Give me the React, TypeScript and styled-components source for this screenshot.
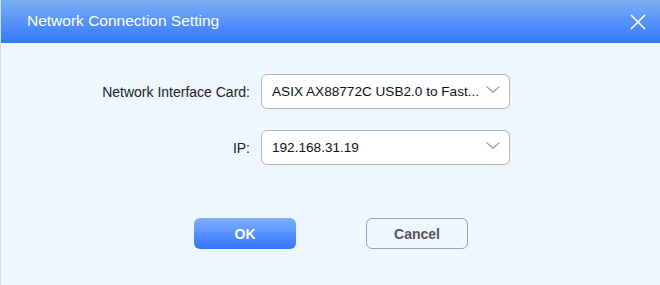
import React from "react";
import styled, { createGlobalStyle } from "styled-components";

const GlobalStyle = createGlobalStyle`
  html, body {
    margin: 0;
    padding: 0;
    background: #eef6ff;
    font-family: "Liberation Sans", Arial, sans-serif;
  }
`;

type FieldProps = {
  label: string;
  value: string;
};

const Field: React.FC<FieldProps> = ({ label, value }) => (
  <Row>
    <Label>{label}</Label>
    <Select>
      <SelectValue>{value}</SelectValue>
      <Chevron viewBox="0 0 14 7">
        <path d="M0.5 0.5 L7 6.2 L13.5 0.5" />
      </Chevron>
    </Select>
  </Row>
);

const App: React.FC = () => {
  return (
    <>
      <GlobalStyle />
      <Dialog>
        <Header>
          <Title>Network Connection Setting</Title>
          <CloseButton aria-label="close">
            <svg viewBox="0 0 16 16" width="16" height="16">
              <path d="M1 1 L15 15 M15 1 L1 15" />
            </svg>
          </CloseButton>
        </Header>
        <Body>
          <Fields>
            <Field
              label="Network Interface Card:"
              value="ASIX AX88772C USB2.0 to Fast..."
            />
            <Field label="IP:" value="192.168.31.19" />
          </Fields>
          <Actions>
            <PrimaryButton>OK</PrimaryButton>
            <SecondaryButton>Cancel</SecondaryButton>
          </Actions>
        </Body>
      </Dialog>
    </>
  );
};

export default App;

const Dialog = styled.div`
  width: 660px;
  height: 285px;
  display: flex;
  flex-direction: column;
  background: #eef6ff;
  border-left: 1px solid #d8dde4;
  box-sizing: border-box;
`;

const Header = styled.div`
  height: 43px;
  flex-shrink: 0;
  display: flex;
  align-items: center;
  justify-content: space-between;
  padding: 0 14px 0 26px;
  background: linear-gradient(to bottom, #7aaff1, #3377ff);
`;

const Title = styled.div`
  color: #ffffff;
  font-size: 15.5px;
  margin-top: -2px;
`;

const CloseButton = styled.div`
  width: 16px;
  height: 16px;
  display: flex;

  svg {
    stroke: #ffffff;
    stroke-width: 1.6;
    fill: none;
  }
`;

const Body = styled.div`
  display: flex;
  flex-direction: column;
  padding-top: 31px;
`;

const Fields = styled.div`
  display: flex;
  flex-direction: column;
  gap: 21px;
`;

const Row = styled.div`
  display: grid;
  grid-template-columns: 249px 249px;
  column-gap: 11px;
  align-items: center;
`;

const Label = styled.div`
  text-align: right;
  font-size: 14px;
  color: #222222;
`;

const Select = styled.div`
  height: 35px;
  box-sizing: border-box;
  display: flex;
  align-items: center;
  justify-content: space-between;
  padding: 0 9px 0 10px;
  background: #ffffff;
  border: 1px solid #b4b4b4;
  border-radius: 6px;
`;

const SelectValue = styled.span`
  font-size: 13.6px;
  color: #111111;
  white-space: nowrap;
`;

const Chevron = styled.svg`
  width: 14px;
  height: 7px;
  margin-top: -4px;
  fill: none;
  stroke: #9a9a9a;
  stroke-width: 1.1;
`;

const Actions = styled.div`
  display: flex;
  gap: 70px;
  padding-left: 193px;
  margin-top: 53px;
`;

const ButtonBase = styled.button`
  width: 102px;
  height: 31px;
  box-sizing: border-box;
  border-radius: 6px;
  font-family: "Liberation Sans", Arial, sans-serif;
  font-size: 14px;
  font-weight: bold;
  cursor: pointer;
  padding: 0;
`;

const PrimaryButton = styled(ButtonBase)`
  border: none;
  color: #ffffff;
  background: linear-gradient(to bottom, #7dafff, #3274ff);
`;

const SecondaryButton = styled(ButtonBase)`
  border: 1px solid #a0a0a0;
  color: #555555;
  background: transparent;
`;
